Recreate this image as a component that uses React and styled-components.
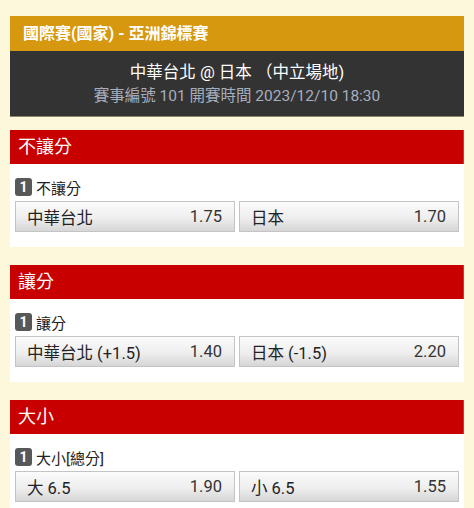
import React from 'react';
import styled, { createGlobalStyle } from 'styled-components';

const GlobalStyle = createGlobalStyle`
  html, body {
    margin: 0;
    padding: 0;
    background: #fdf8dc;
  }
  body {
    font-family: Roboto, "Noto Sans CJK TC", sans-serif;
  }
`;

const markets = [
  {
    title: '不讓分',
    label: '不讓分',
    picks: [
      { name: '中華台北', odds: '1.75' },
      { name: '日本', odds: '1.70' },
    ],
  },
  {
    title: '讓分',
    label: '讓分',
    picks: [
      { name: '中華台北 (+1.5)', odds: '1.40' },
      { name: '日本 (-1.5)', odds: '2.20' },
    ],
  },
  {
    title: '大小',
    label: '大小[總分]',
    picks: [
      { name: '大 6.5', odds: '1.90' },
      { name: '小 6.5', odds: '1.55' },
    ],
  },
];

function App() {
  return (
    <Page>
      <GlobalStyle />
      <League>國際賽(國家) - 亞洲錦標賽</League>
      <MatchInfo>
        <Teams>中華台北 @ 日本 （中立場地)</Teams>
        <Meta>賽事編號 101 開賽時間 2023/12/10 18:30</Meta>
      </MatchInfo>

      {markets.map((m, i) => (
        <Market key={m.title} first={i === 0}>
          <MarketTitle>{m.title}</MarketTitle>
          <MarketBody>
            <BetLabel>
              <Badge>1</Badge>
              {m.label}
            </BetLabel>
            <Picks>
              {m.picks.map((p) => (
                <Pick key={p.name}>
                  <span>{p.name}</span>
                  <Odds>{p.odds}</Odds>
                </Pick>
              ))}
            </Picks>
          </MarketBody>
        </Market>
      ))}
    </Page>
  );
}

const Page = styled.div`
  padding: 16px 10px 0;
  height: 508px;
  box-sizing: border-box;
  overflow: hidden;
`;

const League = styled.div`
  background: #d6980f;
  color: #fff;
  font-size: 16px;
  font-weight: 700;
  height: 35px;
  line-height: 35px;
  padding-left: 13px;
`;

const MatchInfo = styled.div`
  background: #333333;
  height: 66px;
  box-sizing: border-box;
  padding-top: 10px;
  text-align: center;
  border-bottom: 1px solid #8a8468;
`;

const Teams = styled.div`
  color: #fff;
  font-size: 16.5px;
  line-height: 24px;
`;

const Meta = styled.div`
  color: #a7aebd;
  font-size: 15.5px;
  line-height: 22px;
`;

const Market = styled.section`
  margin-top: ${(p) => (p.first ? '13px' : '18px')};
`;

const MarketTitle = styled.div`
  background: #c80000;
  color: #fff;
  font-size: 18px;
  height: 34px;
  line-height: 34px;
  padding-left: 8px;
  border-right: 1px solid #a84a3a;
`;

const MarketBody = styled.div`
  background: #fff;
  padding: 13px 5px 15px;
`;

const BetLabel = styled.div`
  display: flex;
  align-items: center;
  gap: 4px;
  height: 20px;
  margin-bottom: 4px;
  font-size: 15px;
  color: #222;
`;

const Badge = styled.span`
  display: inline-flex;
  align-items: center;
  justify-content: center;
  width: 17px;
  height: 18px;
  border-radius: 3px;
  background: #585858;
  color: #fff;
  font-size: 14px;
  font-weight: 700;
`;

const Picks = styled.div`
  display: grid;
  grid-template-columns: 1fr 1fr;
  gap: 4px;
`;

const Pick = styled.div`
  display: flex;
  justify-content: space-between;
  align-items: center;
  height: 31px;
  box-sizing: border-box;
  padding: 0 12px 0 11px;
  border: 1px solid #c4c4c4;
  background: linear-gradient(to bottom, #fbfbfb 0%, #eeeeee 55%, #d6d6d6 100%);
  font-size: 16.5px;
  color: #222;
`;

const Odds = styled.span`
  color: #333;
`;

export default App;
